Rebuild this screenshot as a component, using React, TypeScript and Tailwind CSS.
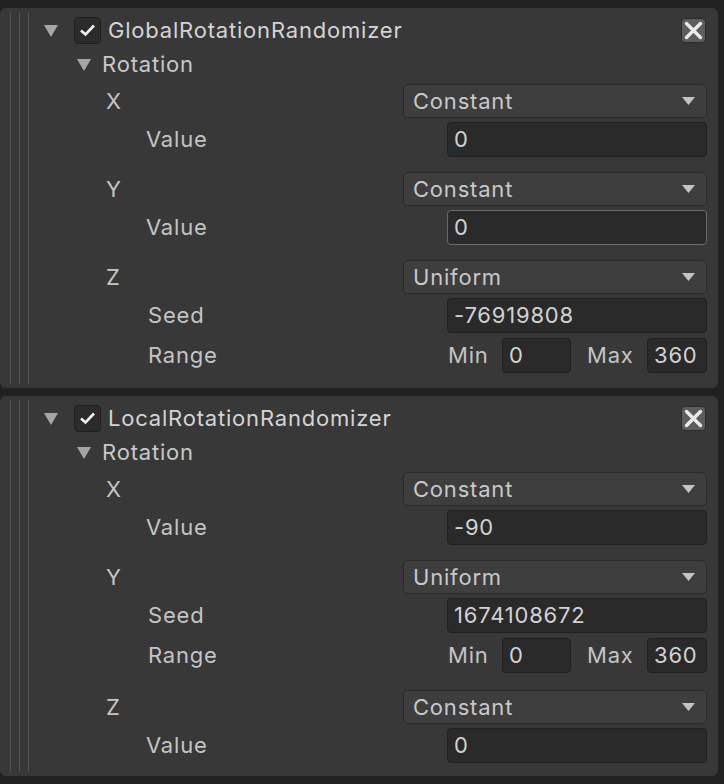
import { FC, ReactNode } from "react";

const Tri: FC<{ className?: string }> = ({ className }) => (
  <svg width="16" height="14" viewBox="0 0 16 14" className={className}>
    <path d="M1 1 H15 L8 13 Z" fill="#a6a6a6" />
  </svg>
);

const Check = () => (
  <div className="w-[27px] h-[27px] rounded-[4px] bg-[#2b2b2b] border border-[#1f1f1f] flex items-center justify-center">
    <svg width="17" height="14" viewBox="0 0 17 14">
      <path d="M2 7.5 L6.5 11.5 L15 2.5" fill="none" stroke="#f0f0f0" strokeWidth="2.6" />
    </svg>
  </div>
);

const Close = () => (
  <svg width="25" height="25" viewBox="0 0 25 25">
    <rect x="0.5" y="0.5" width="24" height="24" rx="3.5" fill="#5d5d5d" stroke="#2a2a2a" />
    <path d="M5.5 5.5 L19.5 19.5 M19.5 5.5 L5.5 19.5" stroke="#eaeaea" strokeWidth="3.4" strokeLinecap="round" />
  </svg>
);

const Dropdown: FC<{ value: string }> = ({ value }) => (
  <div className="w-[304px] h-[34px] rounded-[4px] bg-[#3e3e3e] border border-[#2a2a2a] flex items-center justify-between pl-[9px] pr-[11px] text-[#c8c8c8]">
    <span>{value}</span>
    <svg width="13" height="8" viewBox="0 0 13 8">
      <path d="M0 0 H13 L6.5 8 Z" fill="#c4c4c4" />
    </svg>
  </div>
);

const Field: FC<{ value: string; w?: string; focused?: boolean }> = ({ value, w = "w-[260px]", focused }) => (
  <div
    className={`${w} h-[35px] rounded-[4px] bg-[#2a2a2a] border ${focused ? "border-[#6a6a6a]" : "border-[#202020]"} flex items-center pl-[6px] text-[#d2d2d2]`}
  >
    {value}
  </div>
);

const Row: FC<{ label: string; indent: string; h?: string; children: ReactNode }> = ({ label, indent, h = "h-[38px]", children }) => (
  <div className={`flex items-center justify-between ${h}`}>
    <span className={`${indent} text-[#c4c4c4]`}>{label}</span>
    {children}
  </div>
);

type Axis =
  | { name: string; mode: "Constant"; value: string; focused?: boolean }
  | { name: string; mode: "Uniform"; seed: string; min: string; max: string };

const AxisBlock: FC<{ axis: Axis }> = ({ axis }) => (
  <div className="flex flex-col">
    <Row label={axis.name} indent="pl-[77px]">
      <Dropdown value={axis.mode} />
    </Row>
    {axis.mode === "Constant" ? (
      <Row label="Value" indent="pl-[117px]">
        <Field value={axis.value} focused={axis.focused} />
      </Row>
    ) : (
      <>
        <Row label="Seed" indent="pl-[119px]">
          <Field value={axis.seed} />
        </Row>
        <Row label="Range" indent="pl-[119px]" h="h-[42px]">
          <div className="w-[260px] flex items-center text-[#c4c4c4]">
            <span className="w-[55px] pl-[1px]">Min</span>
            <Field value={axis.min} w="w-[69px]" />
            <span className="w-[76px] pl-[16px]">Max</span>
            <Field value={axis.max} w="w-[60px]" />
          </div>
        </Row>
      </>
    )}
  </div>
);

const Panel: FC<{ title: string; axes: Axis[] }> = ({ title, axes }) => (
  <div className="flex bg-[#383838] rounded-[6px] mr-[6px] h-[380px]">
    <div className="flex gap-[8px] pl-[10px] pt-[4px] pb-[4px]">
      <div className="w-px bg-[#525252]" />
      <div className="w-px bg-[#525252]" />
      <div className="w-px bg-[#525252]" />
    </div>
    <div className="flex-1 flex flex-col pt-[4px] pr-[11px]">
      <div className="flex items-center h-[36px]">
        <Tri className="ml-[14px] mt-[1px]" />
        <div className="ml-[15px]">
          <Check />
        </div>
        <span className="ml-[7px] text-[#d4d4d4]">{title}</span>
        <div className="ml-auto mr-[1px]">
          <Close />
        </div>
      </div>
      <div className="flex items-center h-[32px]">
        <Tri className="ml-[47px] mt-[1px]" />
        <span className="ml-[10px] text-[#c8c8c8]">Rotation</span>
      </div>
      <div className="flex flex-col gap-[12px] mt-[2px]">
        {axes.map((a) => (
          <AxisBlock key={a.name} axis={a} />
        ))}
      </div>
    </div>
  </div>
);

export default function App() {
  return (
    <div
      className="w-[724px] h-[784px] bg-[#212121] flex flex-col gap-[8px] pt-[8px] text-[22px] tracking-[0.8px] leading-none"
      style={{ fontFamily: "Inter, 'Noto Sans', sans-serif" }}
    >
      <Panel
        title="GlobalRotationRandomizer"
        axes={[
          { name: "X", mode: "Constant", value: "0" },
          { name: "Y", mode: "Constant", value: "0", focused: true },
          { name: "Z", mode: "Uniform", seed: "-76919808", min: "0", max: "360" },
        ]}
      />
      <Panel
        title="LocalRotationRandomizer"
        axes={[
          { name: "X", mode: "Constant", value: "-90" },
          { name: "Y", mode: "Uniform", seed: "1674108672", min: "0", max: "360" },
          { name: "Z", mode: "Constant", value: "0" },
        ]}
      />
    </div>
  );
}
